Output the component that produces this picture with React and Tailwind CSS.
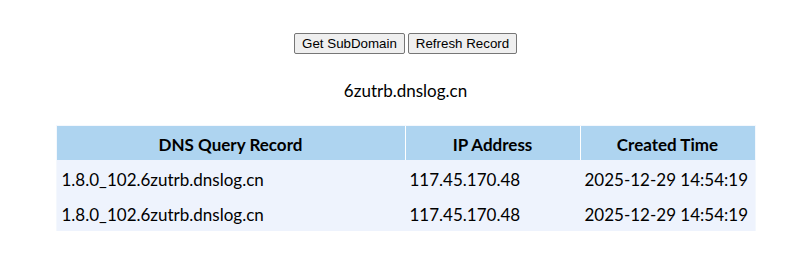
export default function App() {
  const rows = [
    ["1.8.0_102.6zutrb.dnslog.cn", "117.45.170.48", "2025-12-29 14:54:19"],
    ["1.8.0_102.6zutrb.dnslog.cn", "117.45.170.48", "2025-12-29 14:54:19"],
  ];
  const btn =
    "border border-[#767676] bg-[#efefef] rounded-[2px] px-[6px] h-[21px] text-[13.33px] text-black leading-none";
  return (
    <div className="w-[787px] h-[274px] bg-white pl-[24px]" style={{ fontFamily: "Lato, sans-serif" }}>
      <div className="flex flex-col items-center pt-[33px]">
        <div className="flex gap-[3px]" style={{ fontFamily: '"Liberation Sans", Arial, sans-serif' }}>
          <button className={btn + " w-[111px]"}>Get SubDomain</button>
          <button className={btn + " w-[109px]"}>Refresh Record</button>
        </div>
        <div className="mt-[26px] text-[17px] leading-[22px] text-black">6zutrb.dnslog.cn</div>
        <div className="mt-[23px] w-[700px] bg-[#eef3fd] border-t border-x border-[#f4f8fd] text-[17px] text-black">
          <div className="grid grid-cols-[348px_1px_174px_1px_174px] h-[34px] bg-white">
            <div className="bg-[#aed4f0] flex items-center justify-center font-bold pt-[3px]">DNS Query Record</div>
            <div />
            <div className="bg-[#aed4f0] flex items-center justify-center font-bold pt-[3px]">IP Address</div>
            <div />
            <div className="bg-[#aed4f0] flex items-center justify-center font-bold pt-[3px]">Created Time</div>
          </div>
          {rows.map((r, i) => (
            <div key={i} className={"grid grid-cols-[348px_1px_174px_1px_174px] items-center pt-[3px] " + (i === 0 ? "h-[36px]" : "h-[35px]")}>
              <div className="pl-[5px]">{r[0]}</div>
              <div />
              <div className="pl-[4px]">{r[1]}</div>
              <div />
              <div className="pl-[4px]">{r[2]}</div>
            </div>
          ))}
        </div>
      </div>
    </div>
  );
}
